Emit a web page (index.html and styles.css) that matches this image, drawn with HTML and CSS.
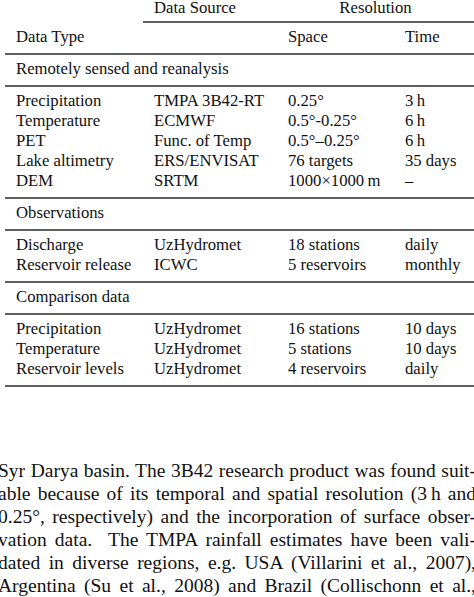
FILE: index.html
```html
<!DOCTYPE html>
<html lang="en">
<head>
  <meta charset="UTF-8">
  <meta name="viewport" content="width=device-width, initial-scale=1.0">
  <title>Data sources</title>
  <link rel="stylesheet" href="styles.css">
</head>
<body>

<div class="page">
  <table class="data-table">
    <colgroup>
      <col class="col-type">
      <col class="col-source">
      <col class="col-space">
      <col class="col-time">
    </colgroup>
    <thead>
      <tr class="head-top">
        <th></th>
        <th class="ruled">Data Source</th>
        <th class="ruled center" colspan="2">Resolution</th>
      </tr>
      <tr class="head-sub">
        <th>Data Type</th>
        <th></th>
        <th>Space</th>
        <th>Time</th>
      </tr>
    </thead>

    <!-- Remotely sensed -->
    <tbody>
      <tr class="section"><td colspan="4">Remotely sensed and reanalysis</td></tr>
    </tbody>
    <tbody class="group">
      <tr>
        <td>Precipitation</td>
        <td>TMPA 3B42-RT</td>
        <td>0.25°</td>
        <td>3&thinsp;h</td>
      </tr>
      <tr>
        <td>Temperature</td>
        <td>ECMWF</td>
        <td>0.5°-0.25°</td>
        <td>6&thinsp;h</td>
      </tr>
      <tr>
        <td>PET</td>
        <td>Func. of Temp</td>
        <td>0.5°–0.25°</td>
        <td>6&thinsp;h</td>
      </tr>
      <tr>
        <td>Lake altimetry</td>
        <td>ERS/ENVISAT</td>
        <td>76 targets</td>
        <td>35 days</td>
      </tr>
      <tr>
        <td>DEM</td>
        <td>SRTM</td>
        <td>1000×1000&thinsp;m</td>
        <td>–</td>
      </tr>
    </tbody>

    <!-- Observations -->
    <tbody>
      <tr class="section"><td colspan="4">Observations</td></tr>
    </tbody>
    <tbody class="group">
      <tr>
        <td>Discharge</td>
        <td>UzHydromet</td>
        <td>18 stations</td>
        <td>daily</td>
      </tr>
      <tr>
        <td>Reservoir release</td>
        <td>ICWC</td>
        <td>5 reservoirs</td>
        <td>monthly</td>
      </tr>
    </tbody>

    <!-- Comparison -->
    <tbody>
      <tr class="section"><td colspan="4">Comparison data</td></tr>
    </tbody>
    <tbody class="group">
      <tr>
        <td>Precipitation</td>
        <td>UzHydromet</td>
        <td>16 stations</td>
        <td>10 days</td>
      </tr>
      <tr>
        <td>Temperature</td>
        <td>UzHydromet</td>
        <td>5 stations</td>
        <td>10 days</td>
      </tr>
      <tr>
        <td>Reservoir levels</td>
        <td>UzHydromet</td>
        <td>4 reservoirs</td>
        <td>daily</td>
      </tr>
    </tbody>
  </table>

  <p class="body-text">
    <span class="line">Syr Darya basin. The 3B42 research product was found suit-</span>
    <span class="line">able because of its temporal and spatial resolution (3&thinsp;h and</span>
    <span class="line">0.25°, respectively) and the incorporation of surface obser-</span>
    <span class="line">vation data.&nbsp; The TMPA rainfall estimates have been vali-</span>
    <span class="line">dated in diverse regions, e.g. USA (Villarini et al., 2007),</span>
    <span class="line">Argentina (Su et al., 2008) and Brazil (Collischonn et al.,</span>
  </p>
</div>

</body>
</html>
```

FILE: styles.css
```css
/* BASE */
* {
  box-sizing: border-box;
}
html, body {
  margin: 0;
  padding: 0;
  background: #fff;
  overflow: hidden;
}
body {
  color: #111;
  font-family: "Liberation Serif", "Times New Roman", serif;
}
.page {
  width: 474px;
  height: 597px;
  overflow: hidden;
}

/* TABLE */
.data-table {
  margin-left: 5px;
  width: 469px;
  border-collapse: collapse;
  table-layout: fixed;
  font-size: 16.7px;
  line-height: 20px;
}
.col-type { width: 138px; }
.col-source { width: 134px; }
.col-space { width: 117px; }
.col-time { width: 80px; }

th, td {
  padding: 0 0 0 11px;
  text-align: left;
  font-weight: normal;
  white-space: nowrap;
}
th.center { text-align: center; padding-left: 0; }

.head-top th {
  line-height: 15px;
  padding-bottom: 6px;
}
.head-top th.ruled {
  border-bottom: 2px solid #5e5e5e;
}
.head-sub th {
  padding-top: 4px;
  padding-bottom: 6px;
}
.head-sub, .section, .group {
  border-bottom: 2px solid #5e5e5e;
}
.section td {
  padding-top: 4px;
  padding-bottom: 6px;
}
.group tr:first-child td { padding-top: 4px; }
.group tr:last-child td { padding-bottom: 6px; }

/* TEXT */
.body-text {
  margin: 72px 0 0 -2px;
  width: 478px;
  font-size: 19.5px;
  line-height: 23px;
}
.line {
  display: block;
  text-align: justify;
  text-align-last: justify;
  white-space: nowrap;
}
```
